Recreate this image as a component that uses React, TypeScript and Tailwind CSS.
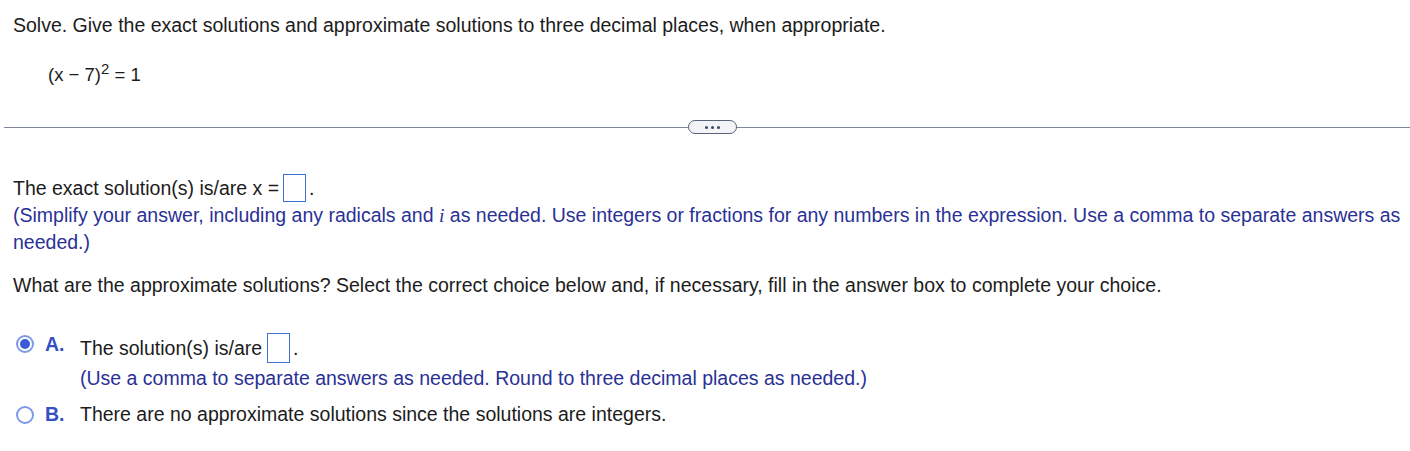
import React from 'react';

const font = { fontFamily: '"Liberation Sans", Arial, sans-serif' };

function AnswerBox({ className = '' }: { className?: string }) {
  return <span className={`inline-block w-[23px] h-[28px] border border-[#3f70d1] bg-white ${className}`}></span>;
}

function Radio({ checked }: { checked?: boolean }) {
  return (
    <span className="w-[18px] h-[18px] rounded-full border-2 border-[#7d9ae6] flex items-center justify-center bg-white">
      {checked && <span className="w-[10px] h-[10px] rounded-full bg-[#3a5bd6]"></span>}
    </span>
  );
}

export default function App() {
  return (
    <div className="w-[1410px] h-[451px] bg-white text-[19.5px] text-[#1c1c1c] overflow-hidden" style={font}>
      <div className="px-[13px] pt-3 leading-[26px]">
        Solve. Give the exact solutions and approximate solutions to three decimal places, when appropriate.
      </div>
      <div className="pl-[48px] mt-[25px] text-[18.5px] leading-[24px]">
        (x − 7)<sup className="text-[15px] relative -top-[7px]">2</sup> = 1
      </div>

      <div className="mt-[33px] flex items-center pl-[4px]">
        <div className="w-[684px] h-px bg-[#7d8797]"></div>
        <div className="w-[49px] h-[14px] rounded-full border border-[#56657a] bg-[#f3f4f8] flex items-center justify-center gap-[3px]">
          <span className="w-[3px] h-[3px] rounded-full bg-[#3c4656]"></span>
          <span className="w-[3px] h-[3px] rounded-full bg-[#3c4656]"></span>
          <span className="w-[3px] h-[3px] rounded-full bg-[#3c4656]"></span>
        </div>
        <div className="flex-1 h-px bg-[#7d8797]"></div>
      </div>

      <div className="pl-[13px] pr-[2px] mt-[39px]">
        <div className="flex items-center h-[29px] leading-[26px]">
          <span>The exact solution(s) is/are x =</span>
          <AnswerBox className="ml-[4px] mr-[3px]" />
          <span>.</span>
        </div>
        <div className="text-[#2a3196] leading-[26px]">
          (Simplify your answer, including any radicals and{' '}
          <i style={{ fontFamily: '"Liberation Serif", "Times New Roman", serif' }}>i</i> as needed. Use integers or
          fractions for any numbers in the expression. Use a comma to separate answers as needed.)
        </div>
        <div className="mt-[17px] leading-[26px]">
          What are the approximate solutions? Select the correct choice below and, if necessary, fill in the answer box
          to complete your choice.
        </div>
      </div>

      <div className="mt-[35px] pl-[16px]">
        <div className="flex items-start">
          <div className="flex items-center h-[22px]">
            <Radio checked />
          </div>
          <span className="ml-[11px] w-[35px] font-bold text-[#3550c4] leading-[22px]">A.</span>
          <div>
            <div className="flex items-center h-[30px] leading-[26px]">
              <span>The solution(s) is/are</span>
              <AnswerBox className="ml-[5px] mr-[3px] h-[30px]" />
              <span>.</span>
            </div>
            <div className="text-[#2a3196] leading-[26px] mt-[2px]">
              (Use a comma to separate answers as needed. Round to three decimal places as needed.)
            </div>
          </div>
        </div>
        <div className="flex items-center mt-[11px] h-[26px]">
          <Radio />
          <span className="ml-[11px] w-[35px] font-bold text-[#3550c4]">B.</span>
          <span>There are no approximate solutions since the solutions are integers.</span>
        </div>
      </div>
    </div>
  );
}
